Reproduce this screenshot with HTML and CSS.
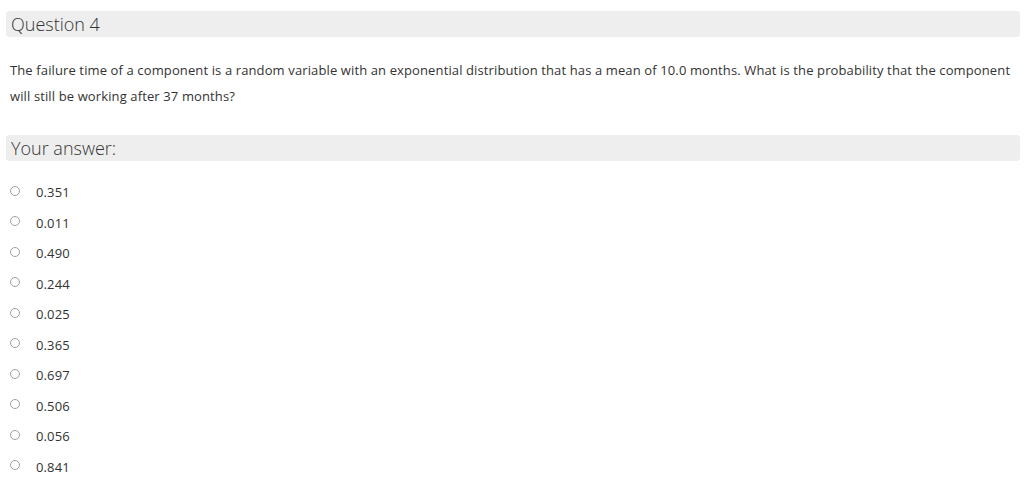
FILE: index.html
```html
<!DOCTYPE html>
<html>
<head>
<meta charset="utf-8">
<link rel="stylesheet" href="styles.css">
</head>
<body>
<div class="page">
  <div class="bar"><span class="bar-title">Question 4</span></div>
  <p class="question">The failure time of a component is a random variable with an exponential distribution that has a mean of 10.0 months. What is the probability that the component will still be working after 37 months?</p>
  <div class="bar answer-bar"><span class="bar-title">Your answer:</span></div>
  <ul class="options">
    <li class="option"><span class="radio"></span><span class="label">0.351</span></li>
    <li class="option"><span class="radio"></span><span class="label">0.011</span></li>
    <li class="option"><span class="radio"></span><span class="label">0.490</span></li>
    <li class="option"><span class="radio"></span><span class="label">0.244</span></li>
    <li class="option"><span class="radio"></span><span class="label">0.025</span></li>
    <li class="option"><span class="radio"></span><span class="label">0.365</span></li>
    <li class="option"><span class="radio"></span><span class="label">0.697</span></li>
    <li class="option"><span class="radio"></span><span class="label">0.506</span></li>
    <li class="option"><span class="radio"></span><span class="label">0.056</span></li>
    <li class="option"><span class="radio"></span><span class="label">0.841</span></li>
  </ul>
</div>
</body>
</html>
```
FILE: styles.css
```css
html, body {
  margin: 0;
  padding: 0;
  background: #fff;
}
body {
  font-family: "Open Sans", "Liberation Sans", sans-serif;
  color: #333;
}
.page {
  padding: 11px 4px 0 6px;
}
.bar {
  background: #eeeeee;
  border-radius: 3px;
  height: 26px;
  display: flex;
  align-items: center;
  padding-left: 5px;
}
.bar-title {
  font-size: 18px;
  font-weight: 300;
  color: #333;
}
.question {
  margin: 20px 0 0 4px;
  font-size: 13px;
  letter-spacing: 0.12px;
  line-height: 26px;
  color: #333;
}
.answer-bar {
  margin-top: 26px;
}
.options {
  list-style: none;
  margin: 16px 0 0 0;
  padding: 0;
}
.option {
  display: flex;
  align-items: center;
  height: 30.5px;
  font-size: 13px;
  letter-spacing: 0.12px;
}
.radio {
  width: 10px;
  height: 10px;
  border: 1px solid #a0a0a0;
  border-radius: 50%;
  margin-left: 4px;
  margin-right: 16px;
  margin-bottom: 3px;
  box-sizing: border-box;
}
.label {
  color: #333;
}
```
